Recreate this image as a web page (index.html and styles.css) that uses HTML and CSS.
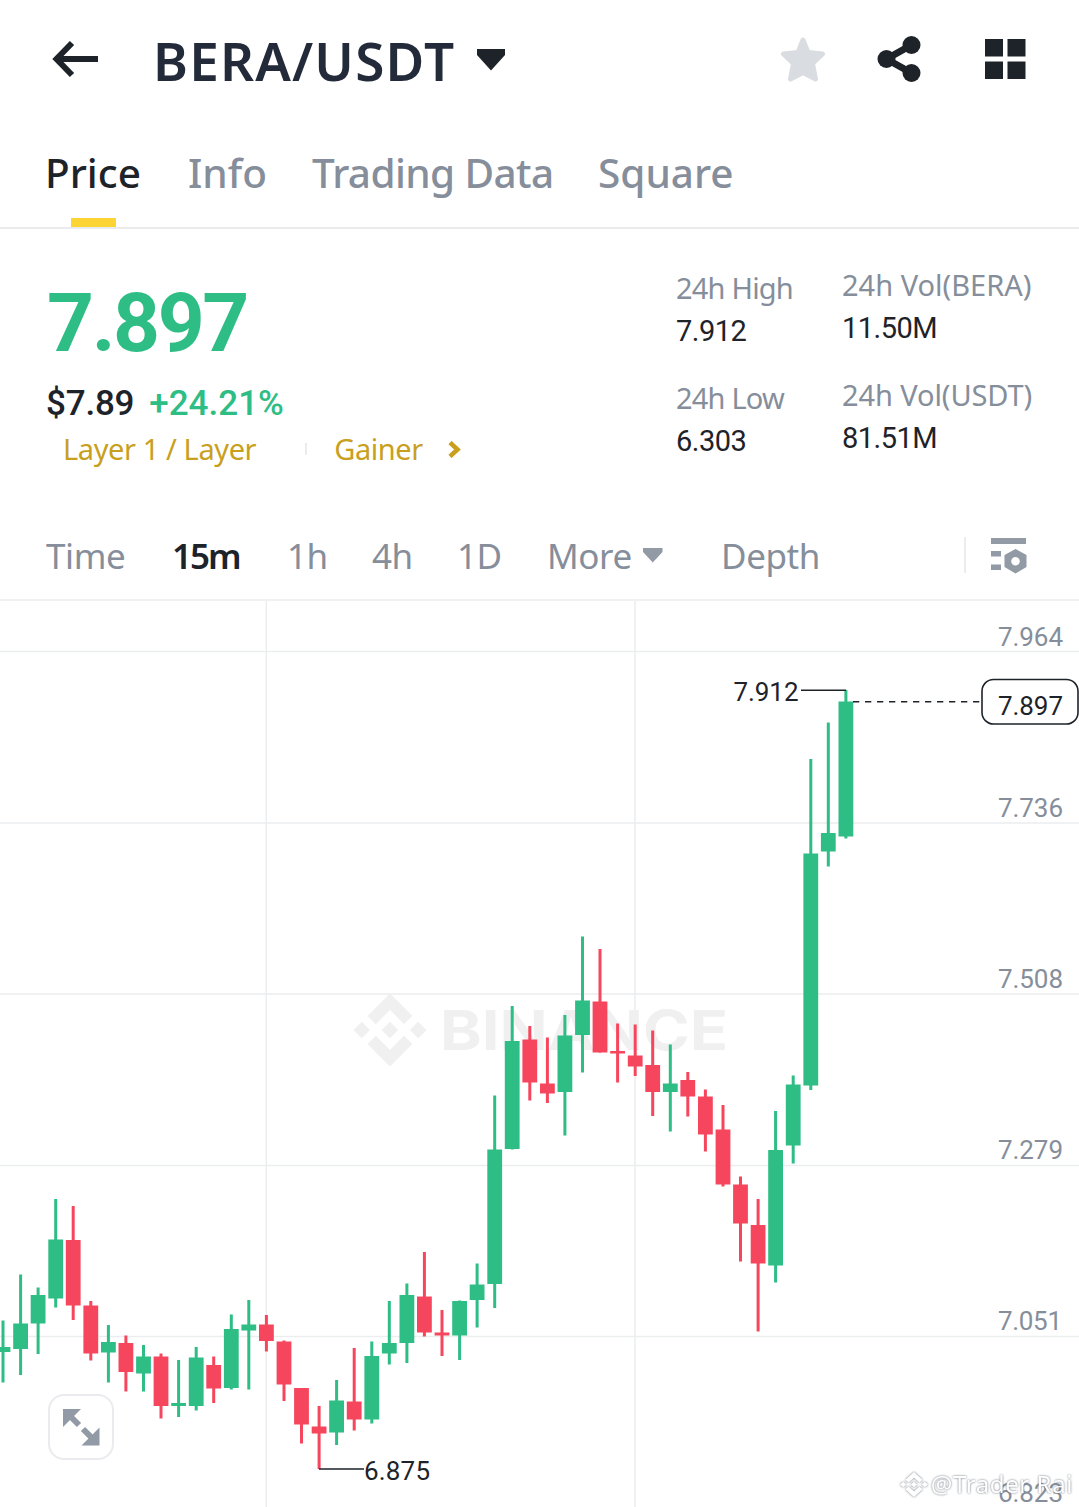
FILE: index.html
```html
<!DOCTYPE html>
<html lang="en">
<head>
    <meta charset="UTF-8">
    <title>BERA/USDT</title>
    <link rel="stylesheet" href="styles.css">
</head>
<body>
    <header class="header">
        <svg class="back" width="48" height="38" viewBox="0 0 48 38">
            <path d="M46 19H5M20 3L4.500 19L20 35" fill="none" stroke="#1e2329" stroke-width="6"/>
        </svg>
        <h1 class="pair">BERA/USDT</h1>
        <svg class="pair-caret" width="28" height="22" viewBox="0 0 28 22">
            <path d="M0 0H28V6L14 21.500L0 6Z" fill="#1e2329"/>
        </svg>
        <div class="actions">
            <svg width="46" height="46" viewBox="0 0 46 46">
                <path d="M23 4L28 16.500L42.500 18L32.500 27.500L35.500 43L23 36.500L10.500 43L13.500 27.500L3.500 18L18 16.500Z" fill="#d9dce1" stroke="#d9dce1" stroke-width="5" stroke-linejoin="round"/>
            </svg>
            <svg width="44" height="46" viewBox="0 0 44 46">
                <path d="M34.500 9L9.500 23L34.500 37" fill="none" stroke="#1e2329" stroke-width="7"/>
                <circle cx="9.500" cy="23" r="9" fill="#1e2329"/>
                <circle cx="34.500" cy="9" r="9" fill="#1e2329"/>
                <circle cx="34.500" cy="37" r="9" fill="#1e2329"/>
            </svg>
            <svg width="41" height="40" viewBox="0 0 41 40">
                <path d="M0 0H18V17.500H0ZM22.500 0H40.500V17.500H22.500ZM0 22.500H18V40H0ZM22.500 22.500H40.500V40H22.500Z" fill="#1e2329"/>
            </svg>
        </div>
    </header>

    <nav class="tabs">
        <a class="tab active">Price</a>
        <a class="tab">Info</a>
        <a class="tab tight">Trading Data</a>
        <a class="tab">Square</a>
    </nav>

    <section class="ticker">
        <div class="last">
            <div class="price">7.897</div>
            <div class="change"><span class="usd">$7.89</span><span class="up">+24.21%</span></div>
            <div class="tags">
                <span>Layer 1 / Layer</span>
                <i class="tag-line"></i>
                <span>Gainer</span>
                <svg width="13" height="17" viewBox="0 0 13 17">
                    <path d="M2 1.500L9.500 8.500L2 15.500" fill="none" stroke="#c99f1e" stroke-width="4.500"/>
                </svg>
            </div>
        </div>
        <dl class="stats low">
            <dt>24h High</dt>
            <dd>7.912</dd>
            <dt>24h Low</dt>
            <dd>6.303</dd>
        </dl>
        <dl class="stats vol">
            <dt>24h Vol(BERA)</dt>
            <dd>11.50M</dd>
            <dt class="tight">24h Vol(USDT)</dt>
            <dd>81.51M</dd>
        </dl>
    </section>

    <nav class="intervals">
        <span>Time</span>
        <span class="on">15m</span>
        <span>1h</span>
        <span>4h</span>
        <span>1D</span>
        <span>More</span>
        <svg width="20" height="15" viewBox="0 0 20 15"><path d="M0 0H19.500V4L9.750 14.500L0 4Z" fill="#929aa5"/></svg>
        <span>Depth</span>
        <i class="bar-line"></i>
        <svg width="37" height="37" viewBox="0 0 37 37">
            <path d="M0 1H35V7H0ZM0 14H10V19.500H0ZM0 27.500H10V33H0Z" fill="#929aa5"/>
            <path fill-rule="evenodd" d="M24.500 12L35.500 18V30L24.500 36.500L13.500 30V18ZM24.500 20A4.300 4.300 0 1 0 24.500 28.600A4.300 4.300 0 1 0 24.500 20Z" fill="#929aa5"/>
        </svg>
    </nav>

    <main class="chart">
        <svg class="plot" width="1079" height="906" viewBox="0 601 1079 906">
            <g class="grid">
                <path d="M0 651.500H1079M0 823H1079M0 994H1079M0 1165.500H1079M0 1336.500H1079M266.300 601V1507M635 601V1507"/>
            </g>
            <g class="brand">
                <path transform="translate(353.500 993.500) scale(3.04)" d="M16.624 13.920l2.718 2.715-7.353 7.353-7.353-7.352 2.717-2.716 4.636 4.660 4.635-4.660zm4.637-4.636L24 12l-2.715 2.716L18.568 12l2.693-2.716zm-9.273 0l2.717 2.692-2.717 2.717L9.272 12l2.716-2.715zm-9.272 0L5.409 12l-2.692 2.692L0 12l2.716-2.716zM11.989.012l7.353 7.329-2.718 2.715-4.635-4.636-4.636 4.660-2.717-2.715 7.353-7.353z"/>
                <text x="440" y="1050" textLength="288" lengthAdjust="spacingAndGlyphs">BINANCE</text>
            </g>
            <g id="candles"></g>
            <g class="marks">
                <path d="M801 690.300H846M319 1469H364"/>
                <path d="M853 701.700H980" stroke-dasharray="6.300 5.700"/>
                <rect x="982" y="679.500" width="96" height="44.500" rx="11.500"/>
            </g>
            <g class="axis">
                <text x="998" y="645.500" textLength="65">7.964</text>
                <text x="998" y="816.500" textLength="65">7.736</text>
                <text x="998" y="987.500" textLength="65">7.508</text>
                <text x="998" y="1158.500" textLength="65">7.279</text>
                <text x="998" y="1330" textLength="64">7.051</text>
                <text x="998" y="1501.500" textLength="65">6.823</text>
            </g>
            <g class="axis dark">
                <text x="733.500" y="700.500" textLength="65">7.912</text>
                <text x="998" y="714.500" textLength="65">7.897</text>
                <text x="364" y="1479.500" textLength="66">6.875</text>
            </g>
        </svg>
        <button class="expand">
            <svg width="37" height="37" viewBox="0 0 37 37">
                <path d="M0 0H18L0 18ZM36.500 36.500H18.500L36.500 18.500Z" fill="#929aa5"/>
                <path d="M5 5L16 16M31 31L20 20" stroke="#929aa5" stroke-width="6"/>
            </svg>
        </button>
        <div class="author">
            <svg width="28" height="25" viewBox="0 0 24 24" preserveAspectRatio="none">
                <path fill="#fff" d="M16.624 13.920l2.718 2.715-7.353 7.353-7.353-7.352 2.717-2.716 4.636 4.660 4.635-4.660zm4.637-4.636L24 12l-2.715 2.716L18.568 12l2.693-2.716zm-9.273 0l2.717 2.692-2.717 2.717L9.272 12l2.716-2.715zm-9.272 0L5.409 12l-2.692 2.692L0 12l2.716-2.716zM11.989.012l7.353 7.329-2.718 2.715-4.635-4.636-4.636 4.660-2.717-2.715 7.353-7.353z"/>
            </svg>
            <span>@Trader Rai</span>
        </div>
    </main>
    <script src="chart.js"></script>
</body>
</html>
```
FILE: styles.css
```css
body {
    margin: 0;
    width: 1079px;
    height: 1507px;
    overflow: hidden;
    background: #fff;
    color: #1e2329;
    font-family: "Noto Sans", sans-serif;
}
svg { display: block; }

/* header */
.header {
    display: flex;
    align-items: center;
    height: 118px;
    box-sizing: border-box;
    padding: 0 53px 0 52px;
}
.pair {
    margin: 4px 0 0 53px;
    font-size: 53px;
    line-height: 114px;
    font-weight: 600;
    letter-spacing: 1.2px;
    color: #232b3a;
}
.pair-caret { margin: 2px 0 0 22px; }
.actions {
    display: flex;
    align-items: center;
    margin-left: auto;
}
.actions svg:nth-child(2) { margin-left: 51px; }
.actions svg:nth-child(3) { margin-left: 64px; }

/* tabs */
.tabs {
    display: grid;
    grid-template-columns: 143px 124px 286px auto;
    padding-left: 45px;
    border-bottom: 2px solid #eaebed;
}
.tab {
    position: relative;
    padding-top: 1px;
    font-size: 40.5px;
    line-height: 108px;
    font-weight: 500;
    color: #858e9a;
}
.tab.active { color: #1e2329; }
.tab.tight { letter-spacing: -0.6px; }
.tab.active::after {
    content: "";
    position: absolute;
    left: 26px;
    bottom: 0;
    width: 45px;
    height: 9px;
    background: #fcd535;
}

/* ticker */
.ticker {
    display: grid;
    grid-template-columns: 629px 166px auto;
    height: 234px;
    padding: 47px 0 0 47px;
}
.price {
    font: 700 82px/94px Roboto, sans-serif;
    letter-spacing: -2.4px;
    color: #2ebd85;
}
.change {
    display: flex;
    gap: 15px;
    margin: 14px 0 0 -1px;
    font: 500 35px/40px Roboto, sans-serif;
}
.usd { letter-spacing: -0.2px; }
.up { color: #2ebd85; }
.tags {
    display: flex;
    align-items: center;
    margin-top: 7px;
    padding-left: 16px;
    font-size: 29px;
    line-height: 36px;
    letter-spacing: -0.4px;
    color: #c99f1e;
}
.tag-line {
    width: 2px;
    height: 12px;
    margin: 0 27px 0 49px;
    background: #eaecef;
}
.tags svg { margin-left: 25px; }
.stats { margin: 0; }
.low { margin-top: -8px; }
.vol { margin-top: -11px; }
.stats dt {
    font-size: 29px;
    line-height: 40px;
    letter-spacing: -0.8px;
    color: #858e9a;
}
.vol dt { letter-spacing: 0; }
.vol dt.tight { letter-spacing: -0.1px; }
.stats dd {
    margin: 0 0 24px;
    font: 400 29px/46px Roboto, sans-serif;
    letter-spacing: -0.5px;
}

/* intervals */
.intervals {
    display: grid;
    grid-template-columns: 126px 115px 85px 85px 90px 96px 78px 243px 27px auto;
    align-items: center;
    height: 88px;
    padding: 1px 0 0 46px;
    border-bottom: 2px solid #f0f1f2;
    font-size: 35px;
    letter-spacing: -0.4px;
    color: #858e9a;
}
.intervals .on {
    font-weight: 600;
    letter-spacing: -2px;
    color: #1e2329;
}
.bar-line {
    width: 2px;
    height: 36px;
    background: #eaecef;
}

/* chart */
.chart { position: relative; }
.grid path {
    fill: none;
    stroke: #ecedef;
    stroke-width: 1.5;
}
.brand {
    fill: #f0f0f1;
    font: 700 55px Inter, sans-serif;
}
.up-candle { fill: #2ebd85; }
.down-candle { fill: #f6465d; }
.marks {
    fill: none;
    stroke: #1e2329;
    stroke-width: 1.6;
}
.axis {
    fill: #858e9a;
    font: 400 26px Roboto, sans-serif;
}
.dark { fill: #1e2329; }
.expand {
    position: absolute;
    left: 48px;
    top: 793px;
    display: flex;
    align-items: center;
    justify-content: center;
    width: 66px;
    height: 66px;
    padding: 0;
    border: 2.5px solid #e9ebee;
    border-radius: 16px;
    background: #fff;
}
.author {
    position: absolute;
    right: 6px;
    bottom: 7px;
    display: flex;
    align-items: center;
    gap: 3px;
    font-size: 24px;
    line-height: 32px;
    letter-spacing: 0.6px;
    color: #fff;
    filter: drop-shadow(0 0 0.8px #69717d);
}
```
FILE: chart.js
```js
// x step between candles, then [high, body top, body bottom, low, up]
var step = 17.56;
var candles = [
    [1320.5, 1347, 1352, 1382.5, 1],
    [1274.5, 1323.5, 1349, 1375, 1],
    [1287.5, 1295, 1323.5, 1354, 1],
    [1199, 1239.5, 1298.5, 1307.5, 1],
    [1206, 1240, 1305.5, 1320, 0],
    [1301, 1305.5, 1353.5, 1360.5, 0],
    [1325, 1342, 1352.5, 1382.5, 1],
    [1335.5, 1343, 1372, 1391.5, 0],
    [1345, 1356.5, 1373.5, 1391.5, 1],
    [1353.5, 1356.5, 1406, 1418.5, 0],
    [1360, 1403, 1406, 1417, 1],
    [1347, 1357.5, 1406, 1410.5, 1],
    [1356.5, 1365, 1388.5, 1403, 0],
    [1314.5, 1329, 1388, 1389.5, 1],
    [1300, 1324.5, 1330.5, 1389.5, 1],
    [1315, 1324.5, 1341, 1351.5, 0],
    [1340.5, 1341.5, 1384.5, 1401, 0],
    [1388, 1388, 1424.5, 1443.5, 0],
    [1406, 1426.5, 1433.5, 1469, 0],
    [1380, 1400.5, 1432.5, 1445, 1],
    [1348, 1401.5, 1419.5, 1430.5, 0],
    [1341.5, 1356, 1419.5, 1423.5, 1],
    [1301, 1343, 1353.5, 1364.5, 1],
    [1283.5, 1295, 1343, 1363, 1],
    [1252, 1296.5, 1332.5, 1336.5, 0],
    [1310, 1332.5, 1335.5, 1356, 0],
    [1300.5, 1301, 1335.5, 1360, 1],
    [1263.5, 1284.5, 1300, 1327.5, 1],
    [1095.5, 1149.5, 1284, 1308, 1],
    [1006, 1041, 1149, 1149.5, 1],
    [1026, 1039.5, 1082.5, 1100.5, 0],
    [1037.5, 1083.5, 1093.5, 1103, 0],
    [1015, 1035.5, 1092, 1135.5, 1],
    [936.5, 1000.5, 1035, 1072.5, 1],
    [949, 1001.5, 1052.5, 1052.5, 0],
    [1023.5, 1051, 1053.5, 1082.5, 0],
    [1024.5, 1055.5, 1066.5, 1076, 0],
    [1030.5, 1065, 1092, 1116, 0],
    [1044.5, 1083.5, 1092, 1131.5, 1],
    [1072, 1080, 1096.5, 1116.5, 0],
    [1089.5, 1096.5, 1134.5, 1151.5, 0],
    [1105, 1129.5, 1184.5, 1186.5, 0],
    [1176.5, 1184.5, 1223.5, 1261.5, 0],
    [1199, 1225, 1263.5, 1331.5, 0],
    [1111, 1150, 1265.5, 1282.5, 1],
    [1075.5, 1084.5, 1145.5, 1163.5, 1],
    [759, 853.5, 1085.5, 1090, 1],
    [722.5, 833, 851.5, 866.5, 1],
    [690, 701.5, 836.5, 838.5, 1]
];

function rect(x, y, w, h) {
    return '<rect x="' + x.toFixed(1) + '" y="' + y + '" width="' + w + '" height="' + h + '"/>';
}

var html = '';
candles.forEach(function (c, i) {
    var x = 3 + i * step;
    html += '<g class="' + (c[4] ? 'up-candle' : 'down-candle') + '">';
    html += rect(x - 1.5, c[0], 3, c[3] - c[0]);
    html += rect(x - 7.4, c[1], 14.8, c[2] - c[1]);
    html += '</g>';
});
document.getElementById('candles').innerHTML = html;
```
